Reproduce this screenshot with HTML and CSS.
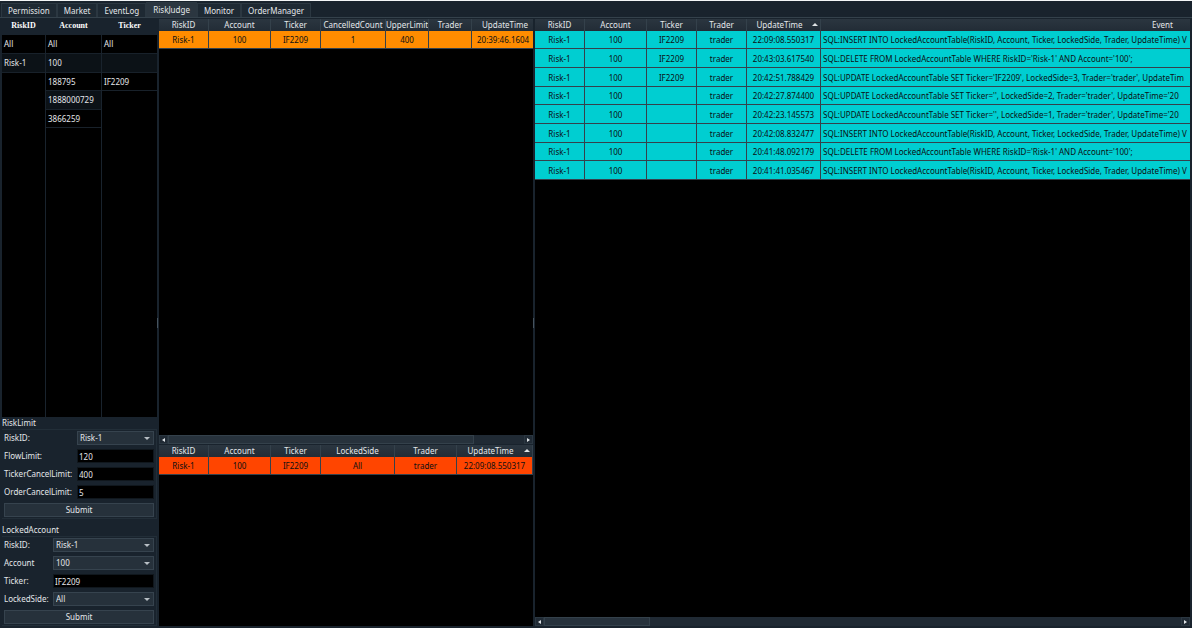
FILE: index.html
```html
<!DOCTYPE html>
<html lang="en">
<head>
  <meta charset="UTF-8" />
  <meta name="viewport" content="width=device-width, initial-scale=1.0"/>
  <title>RiskJudge</title>
  <link rel="stylesheet" href="styles.css">
</head>
<body>
  <nav class="tabs">
    <button class="tab">Permission</button>
    <button class="tab">Market</button>
    <button class="tab">EventLog</button>
    <button class="tab active">RiskJudge</button>
    <button class="tab">Monitor</button>
    <button class="tab">OrderManager</button>
  </nav>

  <main class="workspace">
    <aside class="sidebar">
      <div class="tree">
        <div class="tree-col narrow">
          <h3>RiskID</h3>
          <ul><li>All</li><li>Risk-1</li></ul>
        </div>
        <div class="tree-col">
          <h3>Account</h3>
          <ul><li>All</li><li>100</li><li>188795</li><li>1888000729</li><li>3866259</li></ul>
        </div>
        <div class="tree-col">
          <h3>Ticker</h3>
          <ul><li>All</li><li></li><li>IF2209</li></ul>
        </div>
      </div>

      <h4 class="group-title">RiskLimit</h4>
      <form class="group limit">
        <label for="limit-risk">RiskID:</label>
        <span class="combo"><select id="limit-risk"><option>Risk-1</option></select></span>
        <label for="flow">FlowLimit:</label>
        <input type="text" id="flow" value="120">
        <label for="ticker-cancel">TickerCancelLimit:</label>
        <input type="text" id="ticker-cancel" value="400">
        <label for="order-cancel">OrderCancelLimit:</label>
        <input type="text" id="order-cancel" value="5">
        <button type="button" class="submit-btn">Submit</button>
      </form>

      <h4 class="group-title locked-title">LockedAccount</h4>
      <form class="group locked">
        <label for="lock-risk">RiskID:</label>
        <span class="combo"><select id="lock-risk"><option>Risk-1</option></select></span>
        <label for="lock-account">Account</label>
        <span class="combo"><select id="lock-account"><option>100</option></select></span>
        <label for="lock-ticker">Ticker:</label>
        <input type="text" id="lock-ticker" value="IF2209">
        <label for="lock-side">LockedSide:</label>
        <span class="combo"><select id="lock-side"><option>All</option></select></span>
        <button type="button" class="submit-btn">Submit</button>
      </form>
    </aside>

    <div class="splitter"></div>

    <section class="center">
      <div class="panel cancel-panel">
        <div class="view">
          <table class="grid cancels">
            <thead>
              <tr><th class="w-risk">RiskID</th><th class="w-account">Account</th><th class="w-ticker">Ticker</th><th class="w-count">CancelledCount</th><th class="w-limit">UpperLimit</th><th class="w-limit">Trader</th><th class="sort">UpdateTime</th></tr>
            </thead>
            <tbody>
              <tr><td>Risk-1</td><td>100</td><td>IF2209</td><td>1</td><td>400</td><td></td><td>20:39:46.1604</td></tr>
            </tbody>
          </table>
        </div>
        <div class="scrollbar">
          <button class="arrow left" aria-label="Scroll left"></button>
          <div class="track"><div class="thumb wide"></div></div>
          <button class="arrow right" aria-label="Scroll right"></button>
        </div>
      </div>
      <div class="panel lock-panel">
        <div class="view">
          <table class="grid locks">
            <thead>
              <tr><th class="w-risk">RiskID</th><th class="w-account">Account</th><th class="w-ticker">Ticker</th><th class="w-time">LockedSide</th><th class="w-account">Trader</th><th class="sort">UpdateTime</th></tr>
            </thead>
            <tbody>
              <tr><td>Risk-1</td><td>100</td><td>IF2209</td><td>All</td><td>trader</td><td>22:09:08.550317</td></tr>
            </tbody>
          </table>
        </div>
      </div>
    </section>

    <div class="splitter"></div>

    <section class="panel events-panel">
      <div class="view">
        <table class="grid events">
          <thead>
            <tr><th class="w-risk">RiskID</th><th class="w-account">Account</th><th class="w-ticker">Ticker</th><th class="w-ticker">Trader</th><th class="w-time sort">UpdateTime</th><th>Event</th></tr>
          </thead>
          <tbody>
            <tr><td>Risk-1</td><td>100</td><td>IF2209</td><td>trader</td><td>22:09:08.550317</td><td>SQL:INSERT INTO LockedAccountTable(RiskID, Account, Ticker, LockedSide, Trader, UpdateTime) V</td></tr>
            <tr><td>Risk-1</td><td>100</td><td>IF2209</td><td>trader</td><td>20:43:03.617540</td><td>SQL:DELETE FROM LockedAccountTable WHERE RiskID='Risk-1' AND Account='100';</td></tr>
            <tr><td>Risk-1</td><td>100</td><td>IF2209</td><td>trader</td><td>20:42:51.788429</td><td>SQL:UPDATE LockedAccountTable SET Ticker='IF2209', LockedSide=3, Trader='trader', UpdateTim</td></tr>
            <tr><td>Risk-1</td><td>100</td><td></td><td>trader</td><td>20:42:27.874400</td><td>SQL:UPDATE LockedAccountTable SET Ticker='', LockedSide=2, Trader='trader', UpdateTime='20</td></tr>
            <tr><td>Risk-1</td><td>100</td><td></td><td>trader</td><td>20:42:23.145573</td><td>SQL:UPDATE LockedAccountTable SET Ticker='', LockedSide=1, Trader='trader', UpdateTime='20</td></tr>
            <tr><td>Risk-1</td><td>100</td><td></td><td>trader</td><td>20:42:08.832477</td><td>SQL:INSERT INTO LockedAccountTable(RiskID, Account, Ticker, LockedSide, Trader, UpdateTime) V</td></tr>
            <tr><td>Risk-1</td><td>100</td><td></td><td>trader</td><td>20:41:48.092179</td><td>SQL:DELETE FROM LockedAccountTable WHERE RiskID='Risk-1' AND Account='100';</td></tr>
            <tr><td>Risk-1</td><td>100</td><td></td><td>trader</td><td>20:41:41.035467</td><td>SQL:INSERT INTO LockedAccountTable(RiskID, Account, Ticker, LockedSide, Trader, UpdateTime) V</td></tr>
          </tbody>
        </table>
      </div>
      <div class="scrollbar">
        <button class="arrow left" aria-label="Scroll left"></button>
        <div class="track"><div class="thumb"></div></div>
        <button class="arrow right" aria-label="Scroll right"></button>
      </div>
    </section>
  </main>
</body>
</html>
```
FILE: styles.css
```css
:root {
  --bg: #19232d;
  --raised: #26313b;
  --line: #34414b;
  --text: #e4e7ea;
}
* {
  margin: 0;
  padding: 0;
  box-sizing: border-box;
}
body {
  display: flex;
  flex-direction: column;
  height: 100vh;
  background: var(--bg);
  border-top: 1px solid #f4f6f7;
  color: var(--text);
  font-family: "Noto Sans", "DejaVu Sans", sans-serif;
  font-size: 8px;
  line-height: 10px;
  overflow: hidden;
}
button, input, select {
  font: inherit;
  color: inherit;
}

/* tabs */
.tabs {
  display: flex;
  align-items: flex-end;
  height: 17px;
  padding-left: 1px;
  border-bottom: 1px solid var(--line);
}
.tab {
  height: 14px;
  padding: 0 6px;
  background: #1e2933;
  border: 1px solid #2b3741;
  border-bottom: none;
}
.tab.active {
  height: 15px;
  background: #2b3640;
}

/* main layout */
.workspace {
  flex: 1;
  display: flex;
  min-height: 0;
  padding: 1px 2px 2px;
}
.sidebar {
  width: 155px;
  display: flex;
  flex-direction: column;
}
.splitter {
  width: 2px;
  display: flex;
  align-items: center;
}
.splitter::before {
  content: "";
  width: 1px;
  height: 10px;
  background: #46535e;
}
.center {
  flex: 374;
  min-width: 0;
  display: flex;
  flex-direction: column;
  gap: 1px;
}
.panel {
  display: flex;
  flex-direction: column;
  min-width: 0;
  min-height: 0;
  background: #000;
}
.cancel-panel { flex: 425; }
.lock-panel { flex: 181; }
.events-panel { flex: 655; }
.view {
  flex: 1;
  min-height: 0;
  overflow: hidden;
}

/* account tree */
.tree {
  flex: 1;
  display: flex;
  gap: 1px;
}
.tree-col {
  flex: 55;
  display: flex;
  flex-direction: column;
}
.tree-col.narrow { flex: 43; }
.tree h3 {
  height: 16px;
  font: bold 8px/14px "Liberation Serif", serif;
  color: #fff;
  text-align: center;
}
.tree ul {
  flex: 1;
  background: #000;
  list-style: none;
}
.tree li {
  height: 19px;
  padding-left: 2px;
  border-bottom: 1px solid #18212a;
  line-height: 18px;
}
.tree li:nth-child(2n) { background: #0c1217; }
.tree li:nth-child(2n+3) { height: 18px; }

/* forms */
.group-title {
  font-weight: normal;
  height: 12px;
  line-height: 12px;
}
.locked-title { margin-top: 5px; }
.group {
  display: grid;
  align-items: center;
  gap: 4px 0;
  padding: 1px 2px;
  border: 1px solid #222e38;
  border-left: none;
}
.limit { grid-template-columns: 73px 1fr; }
.locked { grid-template-columns: 49px 1fr; }
.group input {
  width: 100%;
  min-width: 0;
  height: 14px;
  padding: 0 1px;
  background: #000;
  border: 1px solid #10171d;
}
.combo {
  position: relative;
  display: flex;
}
.combo::after {
  content: "";
  position: absolute;
  right: 4px;
  top: 6px;
  border: 3px solid transparent;
  border-top-color: #b8bfc5;
  border-bottom: none;
}
.combo select {
  appearance: none;
  width: 100%;
  height: 14px;
  padding: 0 2px;
  background: var(--raised);
  border: 1px solid #36434e;
}
.submit-btn {
  grid-column: 1 / -1;
  height: 14px;
  background: var(--raised);
  border: 1px solid #36434e;
}

/* tables */
.grid {
  table-layout: fixed;
  border-collapse: separate;
  border-spacing: 0;
}
.cancels { width: 388px; }
.locks { width: 100%; }
.events { width: 970px; }
.grid th, .grid td {
  overflow: hidden;
  white-space: nowrap;
  text-align: center;
}
.grid th {
  height: 12px;
  line-height: 12px;
  background: linear-gradient(#2b3640, #222c36);
  border-right: 1px solid var(--line);
  font-weight: normal;
}
.grid td {
  height: 19px;
  padding-top: 1px;
  color: #0c1013;
  border-right: 1px solid #35414b;
  border-bottom: 1px solid #35414b;
}
.grid tbody tr:nth-child(3n+1) td { height: 18px; }
.cancels td { background: #ff8c00; }
.locks td { background: #ff4500; }
.events td { background: #00ced1; }
.cancels td:last-child {
  padding-left: 5px;
  text-align: left;
}
.events td:last-child {
  padding-left: 2px;
  text-align: left;
}
.w-risk { width: 50px; }
.w-account { width: 62px; }
.w-ticker { width: 50px; }
.w-count { width: 65px; }
.w-limit { width: 43px; }
.w-time { width: 74px; }
.grid .sort {
  position: relative;
  padding-right: 8px;
}
.sort::after {
  content: "";
  position: absolute;
  right: 2px;
  top: 4px;
  border: 3px solid transparent;
  border-bottom-color: #dfe3e6;
  border-top: none;
}

/* scrollbars */
.scrollbar {
  display: flex;
  height: 9px;
  background: #202a34;
}
.arrow {
  display: flex;
  align-items: center;
  justify-content: center;
  width: 9px;
  background: #202a34;
  border: 1px solid #2b3741;
}
.arrow::before {
  content: "";
  border: 2px solid transparent;
}
.arrow.left::before {
  border-right: 3px solid #dfe3e6;
  border-left: none;
}
.arrow.right::before {
  border-left: 3px solid #dfe3e6;
  border-right: none;
}
.track { flex: 1; }
.thumb {
  width: 106px;
  height: 9px;
  background: #27323c;
  border: 1px solid #34414b;
}
.thumb.wide { width: 86%; }
```
